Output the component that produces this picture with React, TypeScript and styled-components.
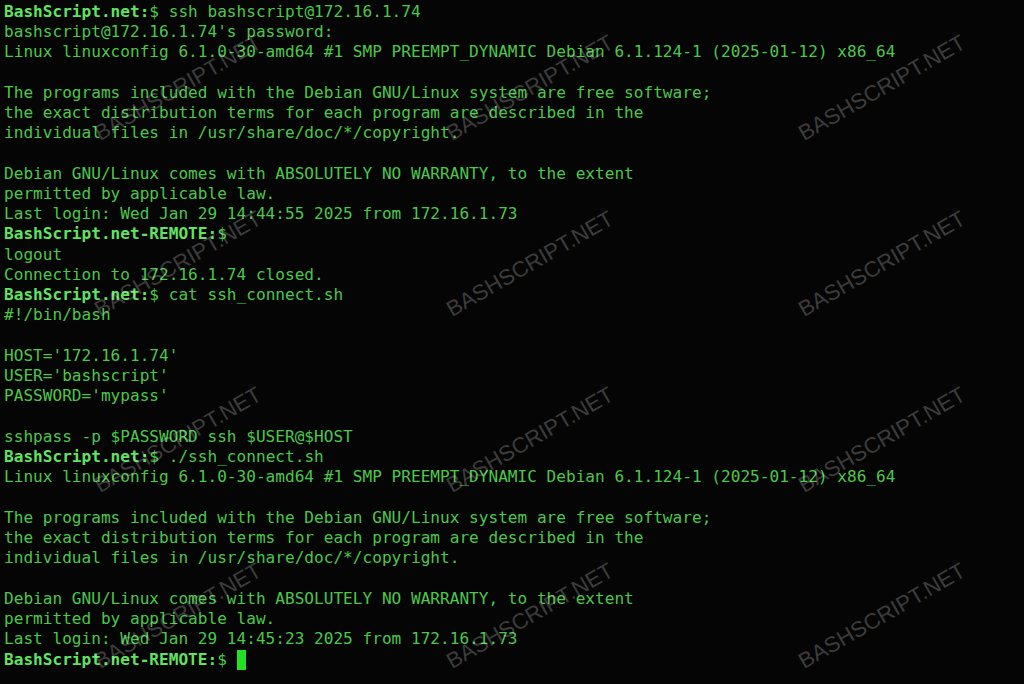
import React from "react";
import styled, { createGlobalStyle } from "styled-components";

const Global = createGlobalStyle`
  html, body {
    margin: 0;
    padding: 0;
    background: #050505;
  }
  #root {
    width: 1024px;
    height: 684px;
  }
`;

const Screen = styled.div`
  position: relative;
  width: 1024px;
  height: 684px;
  overflow: hidden;
  background: #050505;
`;

const Terminal = styled.div`
  padding: 1.6px 0 0 4px;
  font-family: "DejaVu Sans Mono", monospace;
  font-size: 16.1px;
  line-height: 20.25px;
  color: #4cc74c;
  white-space: pre;
`;

const Line = styled.div`
  height: 20.25px;
`;

const Prompt = styled.span`
  font-weight: bold;
  color: #62e262;
`;

const Cursor = styled.span`
  display: inline-block;
  width: 9.7px;
  height: 20px;
  vertical-align: top;
  background: #22e022;
`;

const WatermarkLayer = styled.div`
  position: absolute;
  left: 2px;
  top: 0;
  display: grid;
  grid-template-columns: repeat(3, 352px);
  grid-template-rows: repeat(4, 176px);
  pointer-events: none;
`;

const WatermarkCell = styled.div`
  display: flex;
  align-items: center;
  justify-content: center;
`;

const Watermark = styled.span`
  font-family: "Liberation Sans", Arial, sans-serif;
  font-size: 22px;
  color: rgba(255, 255, 255, 0.23);
  transform: rotate(-30deg);
  white-space: nowrap;
`;

type L =
  | { kind: "text"; text: string }
  | { kind: "prompt"; host: string; cmd: string; cursor?: boolean };

const lines: L[] = [
  { kind: "prompt", host: "BashScript.net:", cmd: " ssh bashscript@172.16.1.74" },
  { kind: "text", text: "bashscript@172.16.1.74's password:" },
  { kind: "text", text: "Linux linuxconfig 6.1.0-30-amd64 #1 SMP PREEMPT_DYNAMIC Debian 6.1.124-1 (2025-01-12) x86_64" },
  { kind: "text", text: "" },
  { kind: "text", text: "The programs included with the Debian GNU/Linux system are free software;" },
  { kind: "text", text: "the exact distribution terms for each program are described in the" },
  { kind: "text", text: "individual files in /usr/share/doc/*/copyright." },
  { kind: "text", text: "" },
  { kind: "text", text: "Debian GNU/Linux comes with ABSOLUTELY NO WARRANTY, to the extent" },
  { kind: "text", text: "permitted by applicable law." },
  { kind: "text", text: "Last login: Wed Jan 29 14:44:55 2025 from 172.16.1.73" },
  { kind: "prompt", host: "BashScript.net-REMOTE:", cmd: "" },
  { kind: "text", text: "logout" },
  { kind: "text", text: "Connection to 172.16.1.74 closed." },
  { kind: "prompt", host: "BashScript.net:", cmd: " cat ssh_connect.sh" },
  { kind: "text", text: "#!/bin/bash" },
  { kind: "text", text: "" },
  { kind: "text", text: "HOST='172.16.1.74'" },
  { kind: "text", text: "USER='bashscript'" },
  { kind: "text", text: "PASSWORD='mypass'" },
  { kind: "text", text: "" },
  { kind: "text", text: "sshpass -p $PASSWORD ssh $USER@$HOST" },
  { kind: "prompt", host: "BashScript.net:", cmd: " ./ssh_connect.sh" },
  { kind: "text", text: "Linux linuxconfig 6.1.0-30-amd64 #1 SMP PREEMPT_DYNAMIC Debian 6.1.124-1 (2025-01-12) x86_64" },
  { kind: "text", text: "" },
  { kind: "text", text: "The programs included with the Debian GNU/Linux system are free software;" },
  { kind: "text", text: "the exact distribution terms for each program are described in the" },
  { kind: "text", text: "individual files in /usr/share/doc/*/copyright." },
  { kind: "text", text: "" },
  { kind: "text", text: "Debian GNU/Linux comes with ABSOLUTELY NO WARRANTY, to the extent" },
  { kind: "text", text: "permitted by applicable law." },
  { kind: "text", text: "Last login: Wed Jan 29 14:45:23 2025 from 172.16.1.73" },
  { kind: "prompt", host: "BashScript.net-REMOTE:", cmd: " ", cursor: true },
];

export default function App() {
  return (
    <>
      <Global />
      <Screen>
        <Terminal>
          {lines.map((l, i) =>
            l.kind === "text" ? (
              <Line key={i}>{l.text}</Line>
            ) : (
              <Line key={i}>
                <Prompt>{l.host}</Prompt>${l.cmd}
                {l.cursor && <Cursor />}
              </Line>
            )
          )}
        </Terminal>
        <WatermarkLayer>
          {Array.from({ length: 12 }).map((_, i) => (
            <WatermarkCell key={i}>
              <Watermark>BASHSCRIPT.NET</Watermark>
            </WatermarkCell>
          ))}
        </WatermarkLayer>
      </Screen>
    </>
  );
}
